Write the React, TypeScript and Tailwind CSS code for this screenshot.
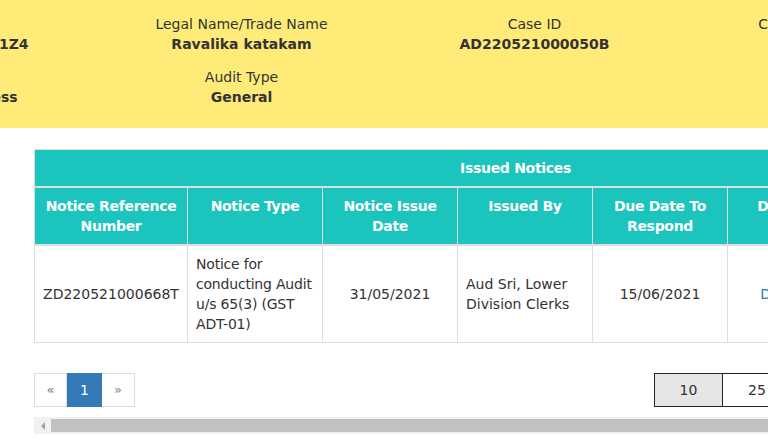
import React from "react";

const info = [
  [
    { label: "GSTIN", value: "36AABCW1234M1Z4" },
    { label: "Category", value: "Printing Business" },
  ],
  [
    { label: "Legal Name/Trade Name", value: "Ravalika katakam" },
    { label: "Audit Type", value: "General" },
  ],
  [{ label: "Case ID", value: "AD220521000050B" }],
  [{ label: "Case Initiation Date", value: "21/05/2021" }],
];

const headers = [
  "Notice Reference Number",
  "Notice Type",
  "Notice Issue Date",
  "Issued By",
  "Due Date To Respond",
  "Download",
  "Status",
];

const widths = [153, 135, 135, 135, 135, 135, 134];

export default function App() {
  return (
    <div className="w-[768px] h-[443px] overflow-hidden bg-white text-[14px] leading-[20px] text-[#333] font-['DejaVu_Sans',Verdana,sans-serif]">
      {/* taxpayer details band */}
      <div className="h-[128px] bg-[#ffec78] pt-[14px]">
        <div className="flex -ml-[198px]">
          {info.map((col, i) => (
            <div key={i} className="w-[293px] shrink-0 flex flex-col gap-[13px] text-center">
              {col.map((f) => (
                <div key={f.label} className="whitespace-nowrap">
                  <div>{f.label}</div>
                  <div className="font-bold">{f.value}</div>
                </div>
              ))}
            </div>
          ))}
        </div>
      </div>

      <div className="pl-[34px] pt-[21px]">
        <table className="w-[962px] border-collapse table-fixed">
          <colgroup>
            {widths.map((w, i) => (
              <col key={i} style={{ width: w }} />
            ))}
          </colgroup>
          <thead>
            <tr>
              <th colSpan={7} className="bg-[#1bc4bc] text-white font-bold tracking-[-0.3px] border border-[#ddd] border-b-2 px-2 py-2 text-center">
                Issued Notices
              </th>
            </tr>
            <tr>
              {headers.map((h) => (
                <th key={h} className="bg-[#1bc4bc] text-white font-bold tracking-[-0.3px] border border-[#ddd] border-b-2 px-1 py-2 align-top text-center">
                  {h}
                </th>
              ))}
            </tr>
          </thead>
          <tbody>
            <tr className="align-middle">
              <td className="border border-[#ddd] px-1 py-2 text-center">ZD220521000668T</td>
              <td className="border border-[#ddd] pl-2 pr-0 py-2 text-left tracking-[-0.2px]">Notice for conducting Audit u/s 65(3) (GST ADT-01)</td>
              <td className="border border-[#ddd] px-2 py-2 text-center">31/05/2021</td>
              <td className="border border-[#ddd] px-2 py-2 text-left">Aud Sri, Lower Division Clerks</td>
              <td className="border border-[#ddd] px-2 py-2 text-center">15/06/2021</td>
              <td className="border border-[#ddd] px-2 py-2 text-center">
                <a className="text-[#337ab7]">Download</a>
              </td>
              <td className="border border-[#ddd] px-2 py-2 text-center">Issued</td>
            </tr>
          </tbody>
        </table>

        <div className="flex mt-[30px]">
          <div className="flex h-[34px]">
            <span className="w-[33px] flex items-center justify-center border border-[#ddd] text-[#777] text-[13px]">«</span>
            <span className="w-[35px] flex items-center justify-center bg-[#337ab7] text-white border border-[#337ab7]">1</span>
            <span className="w-[33px] flex items-center justify-center border border-[#ddd] border-l-0 text-[#6f87a8] text-[13px]">»</span>
          </div>
          <div className="flex h-[34px] ml-[519px]">
            {["10", "25", "50", "100"].map((n, i) => (
              <span
                key={n}
                className={`w-[69px] flex items-center justify-center border border-[#222] ${i > 0 ? "border-l-0" : ""} ${i === 0 ? "bg-[#e6e6e6]" : "bg-white"}`}
              >
                {n}
              </span>
            ))}
          </div>
        </div>

        {/* horizontal scrollbar */}
        <div className="mt-[10px] h-[17px] w-[962px] bg-[#f1f1f1] flex items-center">
          <div className="w-[17px] h-full flex items-center justify-center">
            <svg width="6" height="8" viewBox="0 0 6 8">
              <path d="M5 0 L1 4 L5 8 Z" fill="#a3a3a3" />
            </svg>
          </div>
          <div className="flex-1 h-[13px] bg-[#c1c1c1]" />
        </div>
      </div>
    </div>
  );
}
